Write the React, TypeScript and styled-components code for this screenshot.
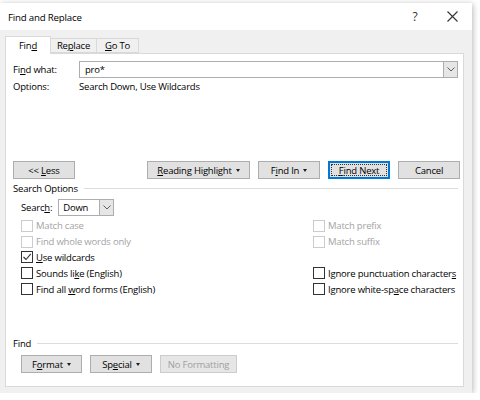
import * as React from "react";
import styled, { createGlobalStyle } from "styled-components";

const Global = createGlobalStyle`
  html, body {
    margin: 0;
    padding: 0;
    background: #ffffff;
  }
  body {
    font-family: "Open Sans", "Noto Sans", "Liberation Sans", sans-serif;
    font-size: 9.5px;
    letter-spacing: -0.2px;
    color: #000000;
  }
`;

const Dialog = styled.div`
  width: 472px;
  height: 390px;
  margin-top: 3px;
  background: #f0f0f0;
  box-shadow: 1px 1px 6px rgba(0, 0, 0, 0.28);
  display: flex;
  flex-direction: column;
`;

const TitleBar = styled.div`
  height: 27px;
  background: #ffffff;
  display: flex;
  align-items: center;
  padding-left: 8px;
`;

const Title = styled.div`
  flex: 1;
  margin-top: 1px;
  font-size: 9.7px;
`;

const TitleButton = styled.div<{ $w: number }>`
  width: ${(p) => p.$w}px;
  display: flex;
  justify-content: center;
  align-items: center;
  color: #333;
  font-size: 12px;
`;

const Body = styled.div`
  flex: 1;
  padding: 0 8px 6px 5px;
  display: flex;
  flex-direction: column;
`;

const Tabs = styled.div`
  height: 23px;
  display: flex;
  align-items: flex-end;
  position: relative;
  z-index: 1;
`;

const Tab = styled.div<{ $active?: boolean; $w: number }>`
  width: ${(p) => p.$w}px;
  height: ${(p) => (p.$active ? 18 : 15)}px;
  margin-bottom: ${(p) => (p.$active ? -1 : 0)}px;
  box-sizing: border-box;
  background: ${(p) => (p.$active ? "#ffffff" : "#f0f0f0")};
  border: 1px solid #d9d9d9;
  border-bottom: ${(p) => (p.$active ? "none" : "1px solid #d9d9d9")};
  margin-left: ${(p) => (p.$active ? 0 : -1)}px;
  display: flex;
  justify-content: center;
  align-items: center;
  padding-bottom: ${(p) => (p.$active ? 1 : 0)}px;
`;

const Panel = styled.div`
  flex: 1;
  background: #ffffff;
  border: 1px solid #d9d9d9;
  display: flex;
  flex-direction: column;
  padding: 7px 5px 0 7px;
`;

const Row = styled.div<{ $top?: number; $left?: number; $h?: number }>`
  display: flex;
  align-items: center;
  margin-top: ${(p) => p.$top ?? 0}px;
  margin-left: ${(p) => p.$left ?? 0}px;
  height: ${(p) => p.$h ?? 16}px;
`;

const Label = styled.div<{ $w?: number; $disabled?: boolean }>`
  width: ${(p) => (p.$w ? `${p.$w}px` : "auto")};
  flex: none;
  white-space: nowrap;
  color: ${(p) => (p.$disabled ? "#a3a3a3" : "#000000")};
`;

const Combo = styled.div`
  flex: 1;
  height: 17px;
  box-sizing: border-box;
  border: 1px solid #adadad;
  display: flex;
  align-items: center;
  padding-left: 5px;
`;

const ComboText = styled.div`
  flex: 1;
`;

const ComboArrow = styled.div`
  width: 14px;
  height: 15px;
  box-sizing: border-box;
  background: #e6e6e6;
  border-left: 1px solid #adadad;
  display: flex;
  align-items: center;
  justify-content: center;
`;

const ButtonRow = styled.div<{ $top?: number }>`
  display: flex;
  align-items: center;
  height: 18px;
  margin-top: ${(p) => p.$top ?? 0}px;
`;

const Button = styled.div<{ $w: number; $gap?: number; $disabled?: boolean; $default?: boolean }>`
  width: ${(p) => p.$w}px;
  height: 18px;
  margin-left: ${(p) => p.$gap ?? 0}px;
  box-sizing: border-box;
  background: ${(p) => (p.$disabled ? "#e6e6e6" : "#e1e1e1")};
  border-style: solid;
  border-width: ${(p) => (p.$default ? 2 : 1)}px;
  border-color: ${(p) => (p.$disabled ? "#cccccc" : p.$default ? "#0078d7" : "#adadad")};
  color: ${(p) => (p.$disabled ? "#a0a0a0" : "#000000")};
  display: flex;
  align-items: center;
  justify-content: center;
  white-space: nowrap;
  position: relative;
  flex: none;
`;

const FocusRing = styled.div`
  position: absolute;
  inset: 1px;
  border: 1px dotted #333;
  pointer-events: none;
`;

const Caret = styled.span`
  display: inline-block;
  width: 0;
  height: 0;
  margin-left: 4px;
  margin-top: 1px;
  border-left: 2.5px solid transparent;
  border-right: 2.5px solid transparent;
  border-top: 3px solid #1e1e1e;
`;

const GroupHead = styled.div<{ $top?: number }>`
  display: flex;
  align-items: center;
  height: 15px;
  margin-top: ${(p) => p.$top ?? 0}px;
  gap: 6px;
`;

const GroupLine = styled.div`
  flex: 1;
  height: 1px;
  background: #dcdcdc;
`;

const Select = styled.div`
  width: 56px;
  height: 17px;
  margin-left: 6px;
  box-sizing: border-box;
  border: 1px solid #adadad;
  display: flex;
  align-items: center;
  padding-left: 4px;
`;

const CheckGrid = styled.div`
  display: grid;
  grid-template-columns: 292px 1fr;
  grid-auto-rows: 15.8px;
  margin-top: 2px;
  margin-left: 8px;
`;

const Check = styled.div<{ $disabled?: boolean }>`
  display: flex;
  align-items: center;
  gap: 3px;
  color: ${(p) => (p.$disabled ? "#a3a3a3" : "#000000")};
  white-space: nowrap;
`;

const Box = styled.div<{ $disabled?: boolean }>`
  width: 12px;
  height: 12px;
  box-sizing: border-box;
  border: 1px solid ${(p) => (p.$disabled ? "#cccccc" : "#333333")};
  background: #ffffff;
  display: flex;
  align-items: center;
  justify-content: center;
  flex: none;
`;

const Filler = styled.div`
  flex: 1;
`;

const ChevronDown = () => (
  <svg width="8" height="5" viewBox="0 0 8 5">
    <path d="M0.5 0.5 L4 4 L7.5 0.5" fill="none" stroke="#606060" strokeWidth="1" />
  </svg>
);

const Tick = () => (
  <svg width="10" height="10" viewBox="0 0 10 10">
    <path d="M1.5 5 L4 7.5 L8.8 1.8" fill="none" stroke="#333" strokeWidth="1.1" />
  </svg>
);

const CloseIcon = () => (
  <svg width="11" height="11" viewBox="0 0 11 11">
    <path d="M0.5 0.5 L10.5 10.5 M10.5 0.5 L0.5 10.5" stroke="#333" strokeWidth="1.1" />
  </svg>
);

interface CheckItemProps {
  label: React.ReactNode;
  checked?: boolean;
  disabled?: boolean;
}

const CheckItem = ({ label, checked, disabled }: CheckItemProps) => (
  <Check $disabled={disabled}>
    <Box $disabled={disabled}>{checked && <Tick />}</Box>
    <span>{label}</span>
  </Check>
);

export default function App() {
  return (
    <>
      <Global />
      <Dialog>
        <TitleBar>
          <Title>Find and Replace</Title>
          <TitleButton $w={20}>?</TitleButton>
          <TitleButton $w={18} style={{ marginLeft: 18, marginRight: 11 }}>
            <CloseIcon />
          </TitleButton>
        </TitleBar>
        <Body>
          <Tabs>
            <Tab $active $w={46}>
              Fin<u>d</u>
            </Tab>
            <Tab $w={47}>
              Re<u>p</u>lace
            </Tab>
            <Tab $w={43}>
              <u>G</u>o To
            </Tab>
          </Tabs>
          <Panel>
            <Row $h={17}>
              <Label $w={66}>
                Fi<u>n</u>d what:
              </Label>
              <Combo>
                <ComboText>pro*</ComboText>
                <ComboArrow>
                  <ChevronDown />
                </ComboArrow>
              </Combo>
            </Row>
            <Row $top={1} $h={15}>
              <Label $w={66}>Options:</Label>
              <Label>Search Down, Use Wildcards</Label>
            </Row>
            <ButtonRow $top={67}>
              <Button $w={62}>
                &lt;&lt;&nbsp;<u>L</u>ess
              </Button>
              <Button $w={103} $gap={72}>
                <u>R</u>eading Highlight
                <Caret />
              </Button>
              <Button $w={62} $gap={8}>
                F<u>i</u>nd In
                <Caret />
              </Button>
              <Button $w={62} $gap={8} $default>
                <FocusRing />
                <u>F</u>ind Next
              </Button>
              <Button $w={62} $gap={8}>
                Cancel
              </Button>
            </ButtonRow>
            <GroupHead $top={2}>
              <Label>Search Options</Label>
              <GroupLine />
            </GroupHead>
            <Row $top={3} $left={8} $h={17}>
              <Label>
                Searc<u>h</u>:
              </Label>
              <Select>
                <ComboText>Down</ComboText>
                <ComboArrow>
                  <ChevronDown />
                </ComboArrow>
              </Select>
            </Row>
            <CheckGrid>
              <CheckItem disabled label="Match case" />
              <CheckItem disabled label="Match prefix" />
              <CheckItem disabled label="Find whole words only" />
              <CheckItem disabled label="Match suffix" />
              <CheckItem
                checked
                label={
                  <>
                    <u>U</u>se wildcards
                  </>
                }
              />
              <div />
              <CheckItem
                label={
                  <>
                    Sounds li<u>k</u>e (English)
                  </>
                }
              />
              <CheckItem
                label={
                  <>
                    Ignore punctuation character<u>s</u>
                  </>
                }
              />
              <CheckItem
                label={
                  <>
                    Find all <u>w</u>ord forms (English)
                  </>
                }
              />
              <CheckItem
                label={
                  <>
                    Ignore white-sp<u>a</u>ce characters
                  </>
                }
              />
            </CheckGrid>
            <Filler />
            <GroupHead>
              <Label>Find</Label>
              <GroupLine />
            </GroupHead>
            <ButtonRow $top={4}>
              <Button $w={61} $gap={8}>
                F<u>o</u>rmat
                <Caret />
              </Button>
              <Button $w={62} $gap={8}>
                Sp<u>e</u>cial
                <Caret />
              </Button>
              <Button $w={77} $gap={8} $disabled>
                No Formatting
              </Button>
            </ButtonRow>
            <div style={{ height: 13 }} />
          </Panel>
        </Body>
      </Dialog>
    </>
  );
}
